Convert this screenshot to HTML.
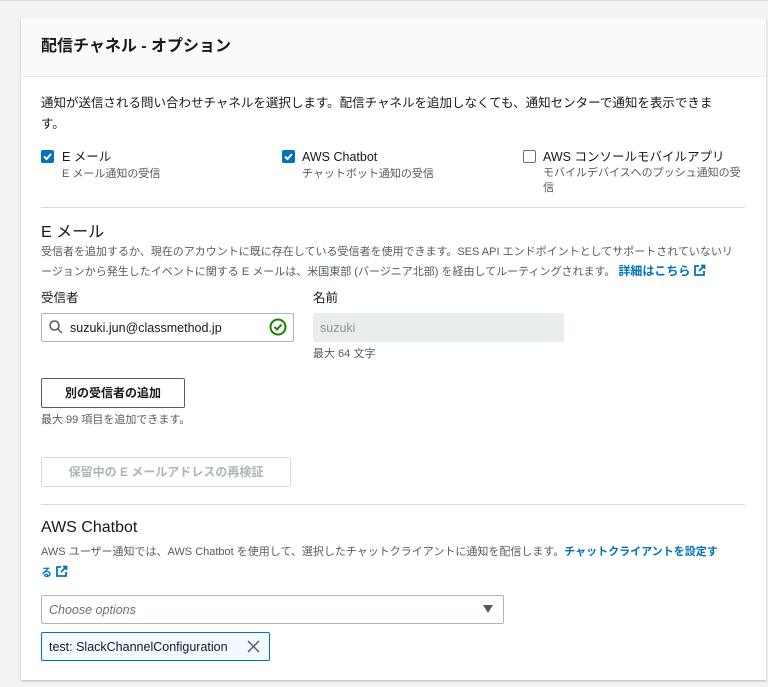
<!DOCTYPE html>
<html><head><meta charset="utf-8"><style>
*{box-sizing:border-box;margin:0;padding:0}
body{width:768px;height:687px;background:#f2f3f3;font-family:"Liberation Sans","Noto Sans CJK JP",sans-serif;color:#16191f;position:relative;overflow:hidden;line-height:16px}
.a{position:absolute;white-space:nowrap}
.card{position:absolute;left:21px;top:18px;width:745px;height:662px;background:#fff;box-shadow:0 1px 2px rgba(0,0,0,.25)}
.hdr{position:absolute;left:21px;top:18px;width:745px;height:59px;background:#fafafa;border-bottom:1px solid #eaeded}
.s{font-size:11px;color:#545b64}
.cb{position:absolute;width:13px;height:13px;border-radius:2px}
.on{background:#0073bb}
.off{border:1px solid #687078;background:#fff}
.hr{position:absolute;left:41px;width:704px;height:1px;background:#d5dbdb}
.btn{position:absolute;border:1px solid #545b64;border-radius:2px;font-size:12px;font-weight:bold;display:flex;align-items:center;justify-content:center}
.lk{color:#0073bb;font-weight:bold}
.ext{display:inline-block;vertical-align:-2px;margin-left:3px}
</style></head><body>
<div class="a" style="left:0;top:0;width:768px;height:1px;background:#d5dbdb"></div>
<div class="card"></div><div class="hdr"></div>
<div class="a" style="left:41px;top:37px;font-size:16px;line-height:20px;font-weight:bold">配信チャネル - オプション</div>
<div class="a" style="left:41px;top:93px;font-size:12.5px;line-height:21px">通知が送信される問い合わせチャネルを選択します。配信チャネルを追加しなくても、通知センターで通知を表示できま<br>す。</div>
<div class="cb on" style="left:41px;top:150px"><svg width="13" height="13"><path d="M3 6.5l2.5 2.5L10 4" stroke="#fff" stroke-width="2" fill="none"/></svg></div>
<div class="a" style="left:62px;top:149px;font-size:12.5px">E メール</div>
<div class="a s" style="left:62px;top:166px">E メール通知の受信</div>
<div class="cb on" style="left:282px;top:150px"><svg width="13" height="13"><path d="M3 6.5l2.5 2.5L10 4" stroke="#fff" stroke-width="2" fill="none"/></svg></div>
<div class="a" style="left:302px;top:149px;font-size:12.5px">AWS Chatbot</div>
<div class="a s" style="left:302px;top:166px">チャットボット通知の受信</div>
<div class="cb off" style="left:523px;top:150px"></div>
<div class="a" style="left:543px;top:149px;font-size:12.5px">AWS コンソールモバイルアプリ</div>
<div class="a s" style="left:543px;top:166px;line-height:15px">モバイルデバイスへのプッシュ通知の受<br>信</div>
<div class="hr" style="top:207px"></div>
<div class="a" style="left:41px;top:223px;font-size:16px;line-height:20px">E メール</div>
<div class="a s" style="left:41px;top:243px;line-height:19px">受信者を追加するか、現在のアカウントに既に存在している受信者を使用できます。SES API エンドポイントとしてサポートされていないリ<br>ージョンから発生したイベントに関する E メールは、米国東部 (バージニア北部) を経由してルーティングされます。 <span class="lk" style="font-size:12px">詳細はこちら<svg class="ext" width="13" height="13"><path d="M6 2H2v9h9V7M8 1.5h3.5V5M11.5 1.5L6 7" stroke="#0073bb" stroke-width="1.8" fill="none"/></svg></span></div>
<div class="a" style="left:41px;top:290px;font-size:12.5px">受信者</div>
<div class="a" style="left:313px;top:290px;font-size:12.5px">名前</div>
<div class="a" style="left:41px;top:313px;width:253px;height:29px;border:1px solid #aab7b8;border-radius:2px"></div>
<svg class="a" style="left:48px;top:319px" width="16" height="16"><circle cx="6.5" cy="6.5" r="4.5" stroke="#545b64" stroke-width="1.5" fill="none"/><path d="M10 10l4 4" stroke="#545b64" stroke-width="1.5"/></svg>
<div class="a" style="left:70px;top:320px;font-size:12.5px">suzuki.jun@classmethod.jp</div>
<svg class="a" style="left:269px;top:318px" width="18" height="18"><circle cx="9" cy="9" r="7.5" stroke="#1d8102" stroke-width="2" fill="none"/><path d="M5.5 9l2.5 2.5 4.5-5" stroke="#1d8102" stroke-width="2" fill="none"/></svg>
<div class="a" style="left:313px;top:313px;width:251px;height:29px;background:#eaeded;border-radius:2px"></div>
<div class="a" style="left:320px;top:320px;font-size:12.5px;color:#879596">suzuki</div>
<div class="a s" style="left:313px;top:346px">最大 64 文字</div>
<div class="btn" style="left:41px;top:378px;width:144px;height:30px">別の受信者の追加</div>
<div class="a s" style="left:41px;top:412px">最大 99 項目を追加できます。</div>
<div class="btn" style="left:41px;top:457px;width:250px;height:30px;border-color:#d5dbdb;color:#aab7b8">保留中の E メールアドレスの再検証</div>
<div class="hr" style="top:504px"></div>
<div class="a" style="left:41px;top:518px;font-size:16px;line-height:20px">AWS Chatbot</div>
<div class="a s" style="left:41px;top:542px;line-height:21px">AWS ユーザー通知では、AWS Chatbot を使用して、選択したチャットクライアントに通知を配信します。<span class="lk">チャットクライアントを設定す</span><br><span class="lk">る<svg class="ext" width="13" height="13"><path d="M6 2H2v9h9V7M8 1.5h3.5V5M11.5 1.5L6 7" stroke="#0073bb" stroke-width="1.8" fill="none"/></svg></span></div>
<div class="a" style="left:41px;top:595px;width:463px;height:29px;border:1px solid #aab7b8;border-radius:2px"></div>
<div class="a" style="left:49px;top:602px;font-size:12.5px;font-style:italic;color:#687078">Choose options</div>
<div class="a" style="left:483px;top:605px;width:0;height:0;border-left:5px solid transparent;border-right:5px solid transparent;border-top:8px solid #545b64"></div>
<div class="a" style="left:41px;top:632px;width:229px;height:29px;border:1px solid #0073bb;border-radius:2px;background:#f1faff"></div>
<div class="a" style="left:49px;top:639px;font-size:12.5px">test: SlackChannelConfiguration</div>
<svg class="a" style="left:247px;top:640px" width="13" height="13"><path d="M1 1l11 11M12 1L1 12" stroke="#545b64" stroke-width="1.5"/></svg>
</body></html>
